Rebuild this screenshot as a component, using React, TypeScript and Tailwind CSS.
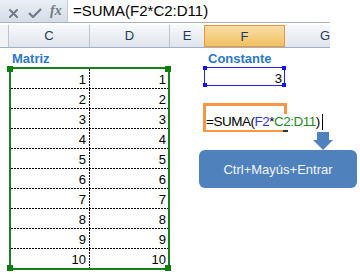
export default function App() {
  const rows = [1, 2, 3, 4, 5, 6, 7, 8, 9, 10];
  return (
    <div className="w-[360px] h-[278px] bg-white overflow-hidden font-['Liberation_Sans',sans-serif] text-black">
      <div className="w-[330px] overflow-hidden">
        {/* formula bar */}
        <div className="flex h-[23px] border-b border-[#a5b4c8]">
          <div className="w-[68px] flex items-start pt-[7px] bg-gradient-to-b from-[#eaeff5] to-[#d5dde8] border-r border-[#c3cddb] text-[#76808e]">
            <svg className="ml-[9px] mt-[2px]" width="9" height="9" viewBox="0 0 9 9">
              <path d="M1 1 L8 8 M8 1 L1 8" stroke="#6f7a88" strokeWidth="2" strokeLinecap="round" />
            </svg>
            <svg className="ml-[10px] mt-[1px]" width="14" height="10" viewBox="0 0 14 10">
              <path d="M1 5 L5 9 L13 1" stroke="#6f7a88" strokeWidth="2.2" fill="none" strokeLinejoin="round" />
            </svg>
            <span className="ml-[8px] -mt-[3px] font-['Liberation_Serif',serif] italic font-bold text-[14px] leading-[14px] text-[#6f7a88]">
              fx
            </span>
          </div>
          <div className="flex-1 bg-white pl-[5px] text-[15px] leading-[22px] whitespace-nowrap">=SUMA(F2*C2:D11)</div>
        </div>
        <div className="h-[2px]" />
        {/* column headers */}
        <div className="flex h-[23px] border-b border-[#9fb1c7] text-[13px] leading-[22px] text-[#1f3a5c] whitespace-nowrap">
          <div className="w-[9px] shrink-0 bg-[#f1f3f6] border-r border-[#b9c4d2]" />
          <div className="w-[81px] shrink-0 text-center bg-gradient-to-b from-[#f7f9fb] to-[#dfe5ed] border-r border-[#b9c4d2]">C</div>
          <div className="w-[80px] shrink-0 text-center bg-gradient-to-b from-[#f7f9fb] to-[#dfe5ed] border-r border-[#b9c4d2]">D</div>
          <div className="w-[34px] shrink-0 text-center bg-gradient-to-b from-[#f7f9fb] to-[#dfe5ed]">E</div>
          <div className="w-[81px] shrink-0 text-center bg-gradient-to-b from-[#fadda6] to-[#f1c160] border border-[#f2963a]">F</div>
          <div className="w-[80px] shrink-0 text-center bg-gradient-to-b from-[#f7f9fb] to-[#dfe5ed]">G</div>
        </div>
      </div>

      {/* body */}
      <div className="flex">
        {/* Matriz */}
        <div className="ml-[9px] w-[161px] shrink-0">
          <div className="mt-[2px] h-[17px] leading-[17px] pl-[3px] text-[13px] font-bold text-[#2a78c8]">Matriz</div>
          <div className="relative border-2 border-[#198019] text-[13px]">
            {rows.map((n) => (
              <div key={n}>
                <div className="flex h-[19px] leading-[21px]">
                  <div className="w-[78px] text-right pr-[3px]">{n}</div>
                  <div className="w-[1px] bg-[linear-gradient(to_bottom,black_2px,transparent_2px)] bg-[length:1px_3px]" />
                  <div className="flex-1 text-right pr-[2px]">{n}</div>
                </div>
                {n < 10 && (
                  <div className="h-[1px] bg-[linear-gradient(to_right,black_2px,transparent_2px)] bg-[length:3px_1px]" />
                )}
              </div>
            ))}
            <div className="absolute -left-[4px] -top-[3px] w-[6px] h-[6px] bg-[#0e7d0e]" />
            <div className="absolute -right-[3px] -top-[3px] w-[6px] h-[6px] bg-[#0e7d0e]" />
            <div className="absolute -left-[4px] -bottom-[3px] w-[6px] h-[6px] bg-[#0e7d0e]" />
            <div className="absolute -right-[3px] -bottom-[3px] w-[6px] h-[6px] bg-[#0e7d0e]" />
          </div>
        </div>

        {/* Constante + formula */}
        <div className="ml-[34px] w-[81px] shrink-0">
          <div className="mt-[2px] h-[17px] leading-[17px] pl-[4px] text-[13px] font-bold text-[#2a78c8] whitespace-nowrap">Constante</div>
          <div className="relative h-[19px] border border-[#2323ee] text-right pr-[2px] text-[13px] leading-[21px]">
            3
            <div className="absolute -left-[2px] -top-[2px] w-[4px] h-[4px] bg-[#1010ff]" />
            <div className="absolute -right-[2px] -top-[2px] w-[4px] h-[4px] bg-[#1010ff]" />
            <div className="absolute -left-[2px] -bottom-[2px] w-[4px] h-[4px] bg-[#1010ff]" />
            <div className="absolute -right-[2px] -bottom-[2px] w-[4px] h-[4px] bg-[#1010ff]" />
          </div>
          <div className="relative mt-[17px] -ml-[1px] w-[84px] h-[29px] border-[3px] border-[#f79646]">
            <span className="absolute left-0 -bottom-[1px] z-10 whitespace-nowrap bg-white pr-[1px] text-[13.5px] tracking-[-0.5px] leading-[16px]">
              =SUMA(<span className="text-[#3434dc]">F2</span>*<span className="text-[#1f8a2a]">C2:D11</span>)
            </span>
            <div className="absolute left-[116px] top-[8px] z-20 w-[1px] h-[16px] bg-black" />
            <div className="absolute left-[77px] top-[22px] w-[5px] h-[4px] bg-[#333]" />
          </div>
          <svg className="block ml-[109px]" width="20" height="18" viewBox="0 0 20 18">
            <rect x="4" y="0" width="12" height="9" fill="#4f81bd" />
            <polygon points="0,8 20,8 10,18" fill="#4f81bd" />
          </svg>
          <div className="-ml-[5px] w-[158px] h-[38px] rounded-[6px] bg-[#4f81bd] flex items-center justify-center pt-[2px] text-[13px] text-[#f2f5fa] whitespace-nowrap">
            Ctrl+Mayús+Entrar
          </div>
        </div>
      </div>
    </div>
  );
}
